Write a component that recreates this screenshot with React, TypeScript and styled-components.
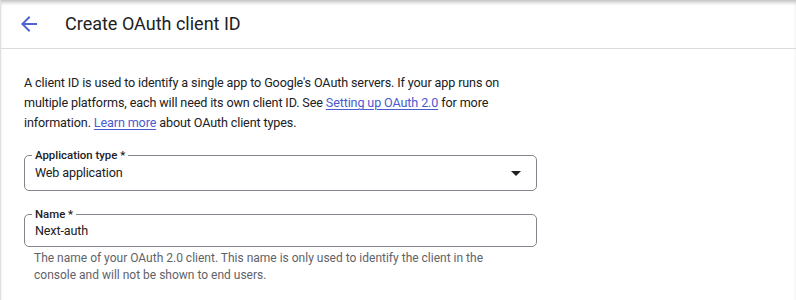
import styled, { createGlobalStyle } from "styled-components";

const GlobalStyle = createGlobalStyle`
  body {
    margin: 0;
    background: #ffffff;
    font-family: Roboto, "Liberation Sans", Arial, sans-serif;
    color: #202124;
  }
`;

const PageLayout = styled.div`
  width: 796px;
  height: 300px;
  overflow: hidden;
  border-left: 1px solid #e0e0e0;
  box-sizing: border-box;
  box-shadow: inset 0 4px 4px -2px rgba(0, 0, 0, 0.28);
`;

const Header = styled.div`
  display: flex;
  align-items: center;
  height: 48px;
  padding-left: 16px;
  border-bottom: 1px solid #dadce0;
  gap: 24px;
`;

const BackButton = styled.button`
  display: flex;
  align-items: center;
  justify-content: center;
  width: 24px;
  height: 24px;
  padding: 0;
  border: none;
  background: none;
  color: #5163d3;
  cursor: pointer;
`;

const TitleText = styled.div`
  font-size: 18px;
  line-height: 26px;
  font-weight: 400;
  color: #202124;
`;

const ContentLayout = styled.div`
  display: flex;
  flex-direction: column;
  padding: 24px 24px 0 23px;
`;

const IntroText = styled.p`
  margin: 0 0 22px;
  width: 500px;
  font-size: 12.6px;
  letter-spacing: -0.13px;
  line-height: 20px;
  color: #202124;
`;

const InlineLink = styled.a`
  color: #4a5bd0;
  text-decoration: underline;
  text-underline-offset: 2px;
`;

const FieldLayout = styled.div`
  display: flex;
  flex-direction: column;
  width: 513px;
  margin-bottom: 23px;
`;

const FieldBox = styled.div<{ $height: number }>`
  position: relative;
  display: flex;
  align-items: center;
  height: ${(p) => p.$height}px;
  padding: 0 15px 0 10px;
  border: 1px solid #80868b;
  border-radius: 5px;
`;

const FloatingLabel = styled.span`
  position: absolute;
  top: -9px;
  left: 7px;
  padding: 0 3px;
  background: #ffffff;
  font-size: 11.4px;
  line-height: 16px;
  font-weight: 500;
  color: #202124;
`;

const ValueText = styled.span`
  flex: 1;
  font-size: 12.6px;
  letter-spacing: -0.15px;
  line-height: 20px;
  color: #202124;
`;

const HintText = styled.div`
  width: 470px;
  padding: 3px 0 0 10px;
  font-size: 12px;
  line-height: 17px;
  color: #5f6368;
`;

const ArrowBack = () => (
  <svg width="24" height="24" viewBox="0 0 24 24" fill="currentColor">
    <path d="M20 11H7.83l5.59-5.59L12 4l-8 8 8 8 1.41-1.41L7.83 13H20v-2z" />
  </svg>
);

const DropTriangle = () => (
  <svg width="10" height="5" viewBox="0 0 10 5" fill="#202124">
    <path d="M0 0l5 5 5-5z" />
  </svg>
);

const Field = (props: {
  label: string;
  value: string;
  height: number;
  hint?: string;
  dropdown?: boolean;
}) => {
  return (
    <FieldLayout>
      <FieldBox $height={props.height}>
        <FloatingLabel>{props.label}</FloatingLabel>
        <ValueText>{props.value}</ValueText>
        {props.dropdown && <DropTriangle />}
      </FieldBox>
      {props.hint && <HintText>{props.hint}</HintText>}
    </FieldLayout>
  );
};

const App = () => {
  return (
    <>
      <GlobalStyle />
      <PageLayout>
        <Header>
          <BackButton aria-label="Back">
            <ArrowBack />
          </BackButton>
          <TitleText>Create OAuth client ID</TitleText>
        </Header>
        <ContentLayout>
          <IntroText>
            A client ID is used to identify a single app to Google's OAuth
            servers. If your app runs on multiple platforms, each will need its
            own client ID. See <InlineLink href="#">Setting up OAuth 2.0</InlineLink>{" "}
            for more information. <InlineLink href="#">Learn more</InlineLink>{" "}
            about OAuth client types.
          </IntroText>
          <Field
            label="Application type *"
            value="Web application"
            height={34}
            dropdown
          />
          <Field
            label="Name *"
            value="Next-auth"
            height={31}
            hint="The name of your OAuth 2.0 client. This name is only used to identify the client in the console and will not be shown to end users."
          />
        </ContentLayout>
      </PageLayout>
    </>
  );
};

export default App;
